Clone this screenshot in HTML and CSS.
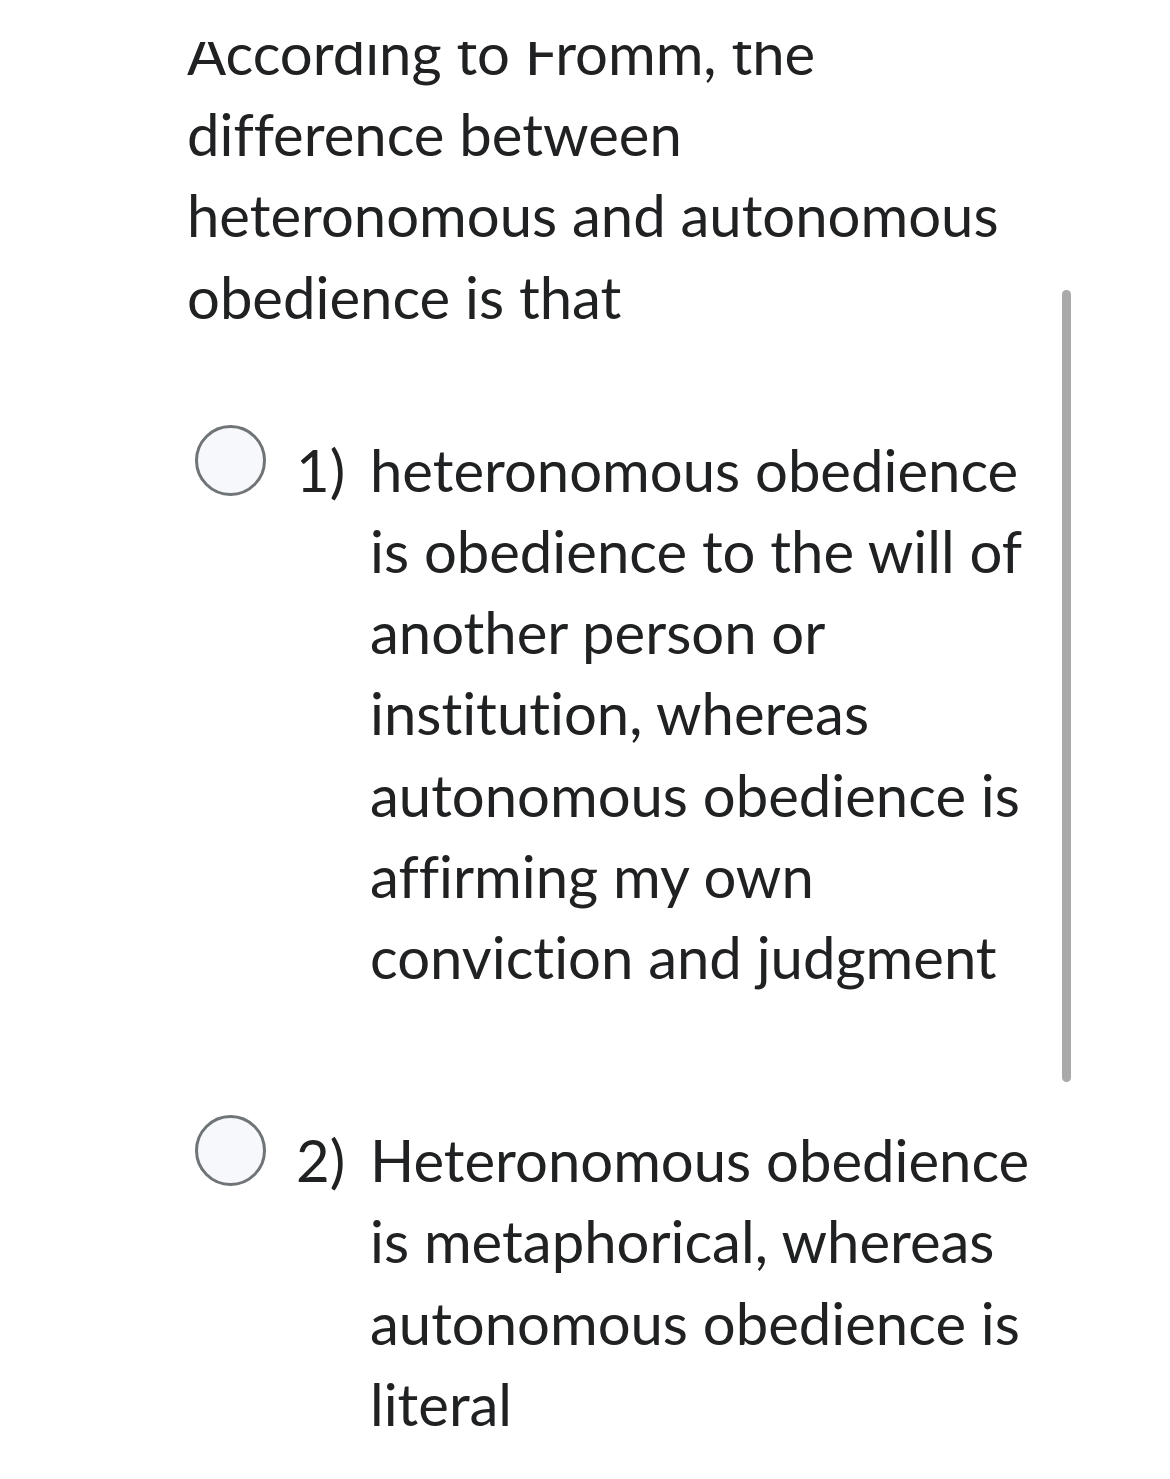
FILE: index.html
```html
<!DOCTYPE html>
<html lang="en">

<head>
    <meta charset="UTF-8">
    <meta name="viewport" content="width=device-width, initial-scale=1.0">
    <title>Question</title>
    <link rel="stylesheet" href="styles.css">
</head>

<body>
    <div class="barra-superior"></div>

    <div class="pregunta">
        <div class="enunciado">
            According to Fromm, the difference between heteronomous and autonomous obedience is that
        </div>

        <div class="opciones">
            <label class="opcion">
                <span class="radio"></span>
                <span class="numero">1)</span>
                <span class="texto">heteronomous obedience is obedience to the will of another person or institution, whereas autonomous obedience is affirming my own conviction and judgment</span>
            </label>
            <label class="opcion">
                <span class="radio"></span>
                <span class="numero">2)</span>
                <span class="texto">Heteronomous obedience is metaphorical, whereas autonomous obedience is literal</span>
            </label>
        </div>
    </div>

    <div class="scroll-thumb"></div>
</body>

</html>
```

FILE: styles.css
```css
body {
    font-family: Lato, "Noto Sans", sans-serif;
    font-variant-ligatures: none;
    background-color: #fff;
    color: #202122;
    margin: 0;
    padding: 0;
    font-size: 58px;
    line-height: 81.2px;
}

.barra-superior {
    position: fixed;
    top: 0;
    left: 0;
    right: 0;
    height: 42px;
    background-color: #fff;
    z-index: 2;
}

.pregunta {
    width: 853px;
    margin-left: 187px;
    padding-top: 12px;
}

.enunciado {
    margin-bottom: 31px;
}

.opcion {
    display: flex;
    align-items: flex-start;
    padding: 61px 0;
}

.radio {
    flex: none;
    box-sizing: border-box;
    width: 71px;
    height: 71px;
    margin: -4px 0 0 8px;
    border: 3px solid #6f7477;
    border-radius: 50%;
    background-color: #f6f8fc;
}

.numero {
    flex: none;
    width: 74px;
    margin-left: 30px;
}

.texto {
    flex: 1;
}

.scroll-thumb {
    position: absolute;
    top: 290px;
    left: 1062px;
    width: 9px;
    height: 792px;
    border-radius: 5px;
    background-color: #a9a9a9;
}
```
